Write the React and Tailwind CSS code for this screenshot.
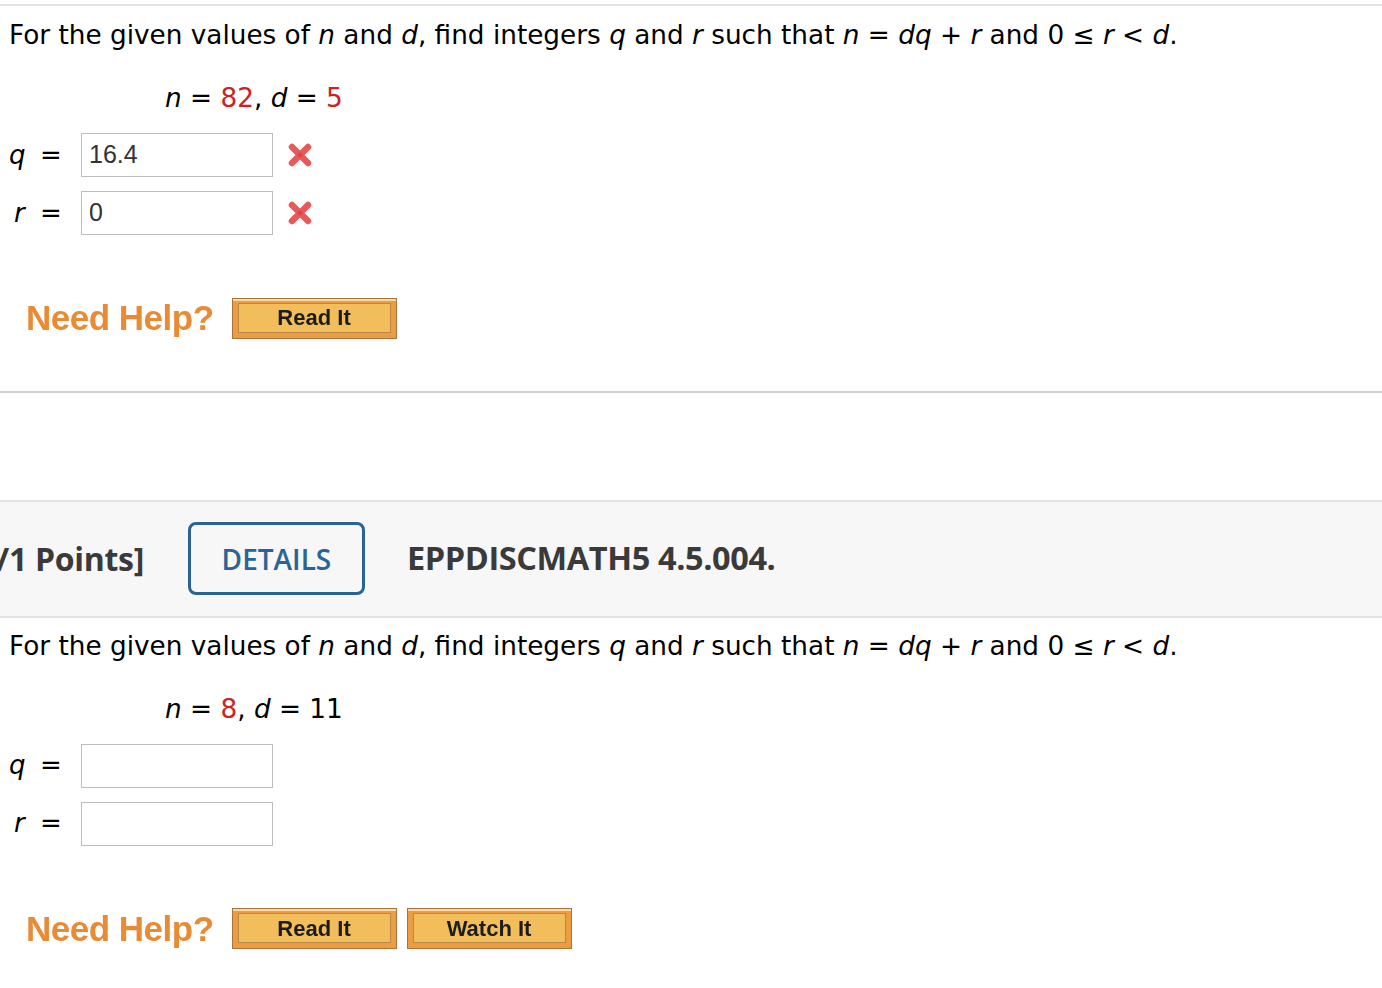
import React from 'react';

const serifless = "font-['DejaVu_Sans',Verdana,sans-serif]";

function V({ children }) {
  return <i className="italic">{children}</i>;
}

function HelpButton({ label }) {
  return (
    <button className="h-[41px] w-[165px] border border-[#a5753b] bg-[#ee9c42] px-[5px] pt-[4px] pb-[5px] shadow-[inset_0_2px_0_#f8d9a8]">
      <div className="flex h-full w-full items-center justify-center border border-[#b8874a] bg-[#f2be5c] font-['Liberation_Sans',Arial,sans-serif] text-[22px] font-bold text-[#1c1c1c] blur-[0.4px]">
        {label}
      </div>
    </button>
  );
}

function NeedHelp({ buttons }) {
  return (
    <div className="flex items-center pl-[26px]">
      <span className="mr-[18px] font-['Liberation_Sans',Arial,sans-serif] text-[35px] font-bold tracking-[-0.5px] text-[#e98a35] blur-[0.5px]">
        Need Help?
      </span>
      <div className="flex gap-[10px]">
        {buttons.map(b => <HelpButton key={b} label={b} />)}
      </div>
    </div>
  );
}

function WrongMark() {
  return (
    <svg width="28" height="28" viewBox="0 0 28 28" className="ml-[13px] blur-[0.4px]">
      <path d="M6 6 L22 22 M22 6 L6 22" stroke="#e85a5a" strokeWidth="6.5" strokeLinecap="round" />
      <circle cx="14" cy="14" r="2.5" fill="#d94848" />
    </svg>
  );
}

function AnswerRow({ name, value, wrong }) {
  return (
    <div className="flex h-[44px] items-center">
      <div className="flex w-[72px] items-center text-[26px]">
        <span className={name === 'r' ? 'ml-[5px] w-[26px]' : 'w-[31px]'}><V>{name}</V></span>
        <span>=</span>
      </div>
      <div className="flex h-[44px] w-[192px] items-center border border-[#bdbdbd] bg-white px-[7px] font-['Liberation_Sans',Arial,sans-serif] text-[25px] text-[#333]">
        {value}
      </div>
      {wrong && <WrongMark />}
    </div>
  );
}

function Question({ nVal, dVal, dRed, q, r, wrong, buttons }) {
  return (
    <div className={`${serifless} text-black`}>
      <p className="pl-[9px] text-[26.3px] leading-[40px]">
        For the given values of <V>n</V> and <V>d</V>, find integers <V>q</V> and <V>r</V> such that <V>n</V> = <V>dq</V> + <V>r</V> and 0 ≤ <V>r</V> &lt; <V>d</V>.
      </p>
      <p className="mt-[23px] pl-[165px] text-[26.3px] leading-[40px]">
        <V>n</V> = <span className="text-[#cc2222]">{nVal}</span>, <V>d</V> = <span className={dRed ? 'text-[#cc2222]' : ''}>{dVal}</span>
      </p>
      <div className="mt-[15px] flex flex-col gap-[14px] pl-[9px]">
        <AnswerRow name="q" value={q} wrong={wrong} />
        <AnswerRow name="r" value={r} wrong={wrong} />
      </div>
      <div className="mt-[57px]">
        <NeedHelp buttons={buttons} />
      </div>
    </div>
  );
}

export default function App() {
  return (
    <div className="h-[988px] w-[1382px] overflow-hidden bg-white">
      <div className="h-[4px] bg-white" />
      <div className="h-[2px] bg-[#e3e3e3]" />
      <div className="pt-[9px]">
        <Question nVal="82" dVal="5" dRed q="16.4" r="0" wrong buttons={['Read It']} />
      </div>
      <div className="mt-[46px] h-[2px] bg-[#cfcfcf]" />
      <div className="h-[107px]" />
      <div className="flex h-[118px] items-center border-y-2 border-[#e2e2e2] bg-[#f7f7f7] font-['Open_Sans',sans-serif]">
        <span className="ml-[-4px] text-[32px] font-bold tracking-[-0.3px] text-[#3a3a3a]">/1 Points]</span>
        <div className="ml-[44px] flex h-[73px] w-[177px] items-center justify-center rounded-[8px] border-[3px] border-[#2a6496] text-[28px] font-semibold text-[#2a6496]">
          DETAILS
        </div>
        <span className="ml-[42px] text-[32.5px] font-bold tracking-[-0.4px] text-[#3a3a3a]">EPPDISCMATH5 4.5.004.</span>
      </div>
      <div className="pt-[8px]">
        <Question nVal="8" dVal="11" q="" r="" buttons={['Read It', 'Watch It']} />
      </div>
    </div>
  );
}
